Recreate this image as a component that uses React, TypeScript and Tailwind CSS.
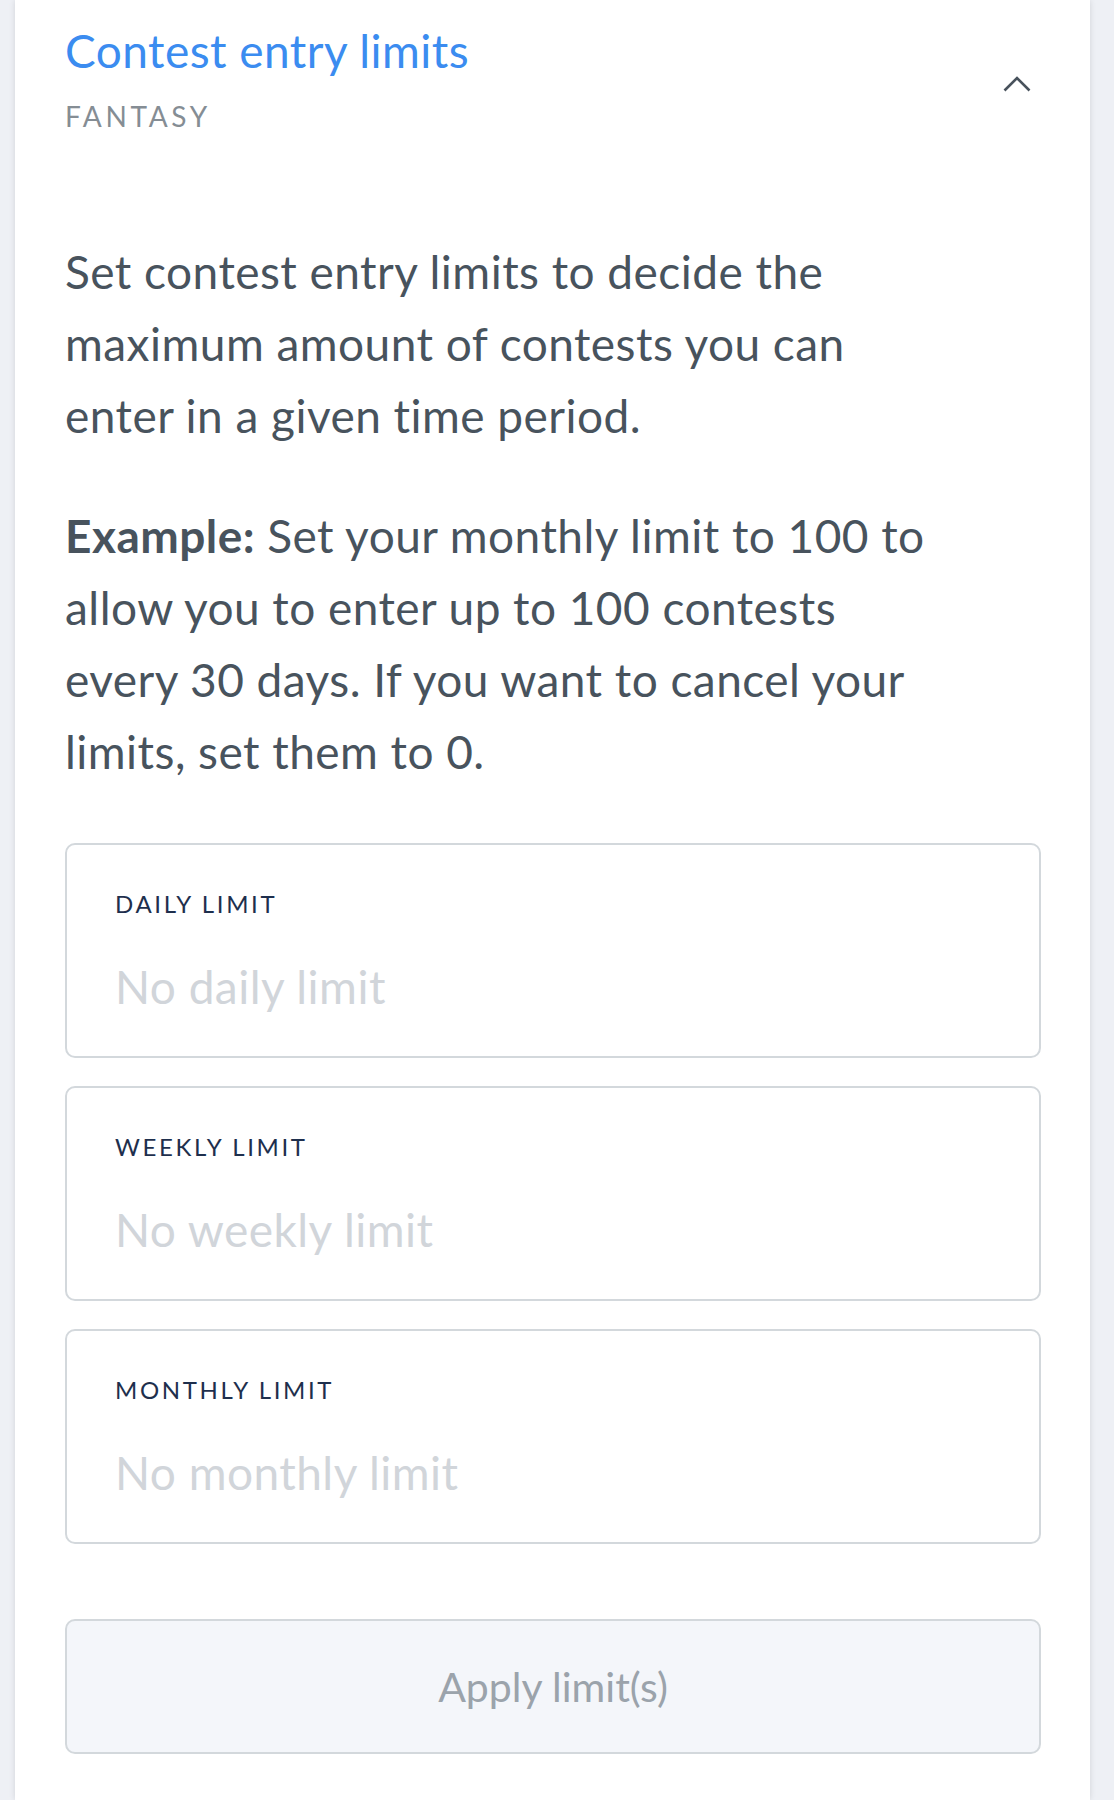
import React from "react";

const font = { fontFamily: "Lato, 'Noto Sans', sans-serif" };

function LimitField({ label, placeholder }: { label: string; placeholder: string }) {
  return (
    <label className="block border-2 border-[#d3d8dc] rounded-[10px] bg-white px-[48px] pt-[44px] pb-[41px]">
      <span className="block text-[24px] leading-[30px] tracking-[0.11em] text-[#1e2f4d] uppercase">
        {label}
      </span>
      <input
        className="block w-full mt-[40px] text-[46px] leading-[56px] h-[56px] tracking-[0.01em] text-[#48535d] placeholder:text-[#d1d5da] outline-none bg-transparent"
        style={font}
        placeholder={placeholder}
      />
    </label>
  );
}

export default function App() {
  return (
    <div className="min-h-[1800px] bg-[#eef0f5] pl-[15px] pr-[24px]" style={font}>
      <div className="bg-white min-h-[1800px] shadow-[0_0_6px_rgba(0,0,0,0.12)] pl-[50px] pr-[49px]">
        <div className="flex justify-between items-start pt-[23px]">
          <div>
            <h2 className="text-[46px] leading-[56px] tracking-[0.01em] text-[#3b8cf0]">Contest entry limits</h2>
            <div className="mt-[20px] text-[28px] leading-[34px] tracking-[0.13em] text-[#858d94]">FANTASY</div>
          </div>
          <button className="mt-[53px] mr-[10px] text-[#48525c]">
            <svg width="28" height="16" viewBox="0 0 28 16" fill="none">
              <polyline points="1.5,14.5 14,2 26.5,14.5" stroke="currentColor" strokeWidth="2.6" />
            </svg>
          </button>
        </div>

        <p className="mt-[103px] text-[46px] leading-[72px] tracking-[0.01em] text-[#48535d]">
          Set contest entry limits to decide the
          <br />
          maximum amount of contests you can
          <br />
          enter in a given time period.
        </p>
        <p className="mt-[48px] text-[46px] leading-[72px] tracking-[0.01em] text-[#48535d]">
          <span className="font-bold">Example:</span> Set your monthly limit to 100 to
          <br />
          allow you to enter up to 100 contests
          <br />
          every 30 days. If you want to cancel your
          <br />
          limits, set them to 0.
        </p>

        <div className="mt-[55px] flex flex-col gap-[28px]">
          <LimitField label="Daily limit" placeholder="No daily limit" />
          <LimitField label="Weekly limit" placeholder="No weekly limit" />
          <LimitField label="Monthly limit" placeholder="No monthly limit" />
        </div>

        <button
          disabled
          className="mt-[75px] w-full h-[135px] border-2 border-[#d3d8dc] rounded-[10px] bg-[#f4f6fa] text-[41px] text-[#9ba3ab]"
          style={font}
        >
          Apply limit(s)
        </button>
      </div>
    </div>
  );
}
